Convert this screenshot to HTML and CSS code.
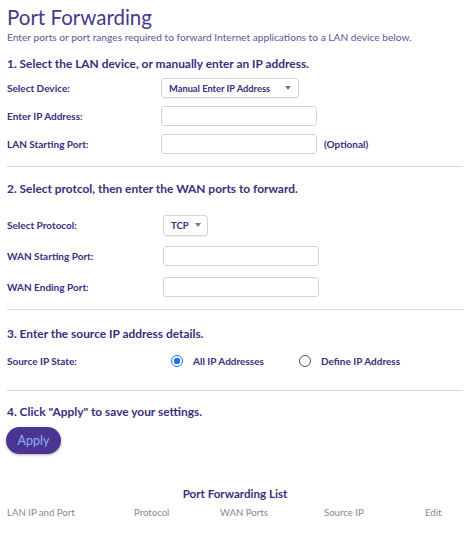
FILE: index.html
```html
<!DOCTYPE html>
<html>
<head>
<meta charset="utf-8">
<link rel="stylesheet" href="styles.css">
</head>
<body>
<div class="page">
  <h1 class="title">Port Forwarding</h1>
  <p class="intro">Enter ports or port ranges required to forward Internet applications to a LAN device below.</p>

  <section class="sec sec1">
    <h2 class="step">1. Select the LAN device, or manually enter an IP address.</h2>
    <div class="row r-sel">
      <span class="label">Select Device:</span>
      <span class="select sel-dev">Manual Enter IP Address <span class="caret"></span></span>
    </div>
    <div class="row">
      <span class="label">Enter IP Address:</span>
      <span class="input"></span>
    </div>
    <div class="row">
      <span class="label">LAN Starting Port:</span>
      <span class="input"></span>
      <span class="opt">(Optional)</span>
    </div>
  </section>
  <hr class="rule rule1">

  <section class="sec sec2">
    <h2 class="step">2. Select protcol, then enter the WAN ports to forward.</h2>
    <div class="row r2">
      <span class="label">Select Protocol:</span>
      <span class="select sel-proto">TCP <span class="caret"></span></span>
    </div>
    <div class="row r2">
      <span class="label">WAN Starting Port:</span>
      <span class="input"></span>
    </div>
    <div class="row r2">
      <span class="label">WAN Ending Port:</span>
      <span class="input"></span>
    </div>
  </section>
  <hr class="rule rule2">

  <section class="sec sec3">
    <h2 class="step">3. Enter the source IP address details.</h2>
    <div class="row r3">
      <span class="label">Source IP State:</span>
      <span class="radio on"></span><span class="rlabel">All IP Addresses</span>
      <span class="radio"></span><span class="rlabel">Define IP Address</span>
    </div>
  </section>
  <hr class="rule rule3">

  <section class="sec sec4">
    <h2 class="step">4. Click "Apply" to save your settings.</h2>
    <button class="apply">Apply</button>
  </section>

  <section class="list">
    <h3 class="list-title">Port Forwarding List</h3>
    <div class="cols">
      <span class="c1">LAN IP and Port</span>
      <span class="c2">Protocol</span>
      <span class="c3">WAN Ports</span>
      <span class="c4">Source IP</span>
      <span class="c5">Edit</span>
    </div>
  </section>
</div>
</body>
</html>
```
FILE: styles.css
```css
html, body {
  margin: 0;
  padding: 0;
  background: #ffffff;
}
body {
  font-family: Lato, "Open Sans", sans-serif;
  color: #3d2f7f;
}
.page {
  padding: 5px 11px 0 7px;
}
.title {
  margin: 0;
  font-size: 20.5px;
  font-weight: 400;
  line-height: 24px;
  color: #463a8c;
}
.intro {
  margin: 2px 0 0;
  font-size: 10.2px;
  line-height: 12px;
  color: #5e5696;
}
.step {
  margin: 0;
  font-size: 11.9px;
  font-weight: 700;
  line-height: 16px;
  color: #3b2d7c;
}
.sec1 { padding-top: 13px; }
.sec1 .step { margin-bottom: 6px; }
.row {
  display: flex;
  align-items: center;
  height: 20px;
  margin-bottom: 8px;
}
.label {
  width: 154px;
  flex: none;
  font-size: 10px;
  font-weight: 700;
  color: #3b2d7c;
}
.r2 .label { width: 156px; }
.select {
  display: inline-flex;
  align-items: center;
  box-sizing: border-box;
  height: 20px;
  border: 1px solid #d4d4d8;
  border-radius: 3px;
  padding: 0 7px;
  font-size: 9.3px;
  font-weight: 700;
  color: #3b2d7c;
  box-shadow: 0 1px 1px rgba(0,0,0,0.05);
}
.sel-dev { width: 138px; }
.sel-proto { width: 45px; height: 21px; font-size: 9.6px; }
.caret {
  display: inline-block;
  width: 0;
  height: 0;
  margin-left: 6px;
  border-left: 3.5px solid transparent;
  border-right: 3.5px solid transparent;
  border-top: 4px solid #777;
}
.sel-dev .caret { margin-left: auto; }
.input {
  display: block;
  box-sizing: border-box;
  width: 156px;
  height: 20px;
  border: 1px solid #d4d4d8;
  border-radius: 3px;
}
.opt {
  margin-left: 7px;
  font-size: 10px;
  font-weight: 700;
  color: #3b2d7c;
}
.rule {
  margin: 0;
  border: 0;
  border-top: 1.5px solid #d8d8dc;
  height: 0;
}
.rule1 { margin-top: 12px; }
.rule2 { margin-top: 12px; }
.rule3 { margin-top: 19px; }
.sec2 { padding-top: 14px; }
.sec2 .step { margin-bottom: 18px; }
.r2 { margin-bottom: 11px; }
.sec3 { padding-top: 16px; }
.sec3 .step { margin-bottom: 9px; }
.r3 .label { width: 164px; }
.radio {
  box-sizing: border-box;
  width: 12px;
  height: 12px;
  border: 1.2px solid #555;
  border-radius: 50%;
  flex: none;
}
.radio.on {
  border-color: #1a73e8;
  background: radial-gradient(circle, #1a73e8 0 3px, #fff 3.4px);
}
.rlabel {
  margin-left: 10px;
  width: 106px;
  font-size: 10px;
  font-weight: 700;
  color: #3b2d7c;
}
.sec4 { padding-top: 13px; }
.sec4 .step { margin-bottom: 7px; }
.apply {
  display: block;
  margin-left: -1px;
  width: 55px;
  height: 27px;
  border: 0;
  border-radius: 14px;
  background: #4a3593;
  color: #8ab4f8;
  font-family: Lato, sans-serif;
  font-size: 12.5px;
  box-shadow: 0 1px 3px rgba(0,0,0,0.3);
}
.list { padding-top: 33px; }
.list-title {
  margin: 0;
  text-align: center;
  font-size: 11.6px;
  font-weight: 700;
  color: #3b2d7c;
  line-height: 14px;
}
.cols {
  display: grid;
  grid-template-columns: 127px 86px 104px 101px auto;
  margin-top: 6px;
  font-size: 9.6px;
  color: #888892;
}
```
